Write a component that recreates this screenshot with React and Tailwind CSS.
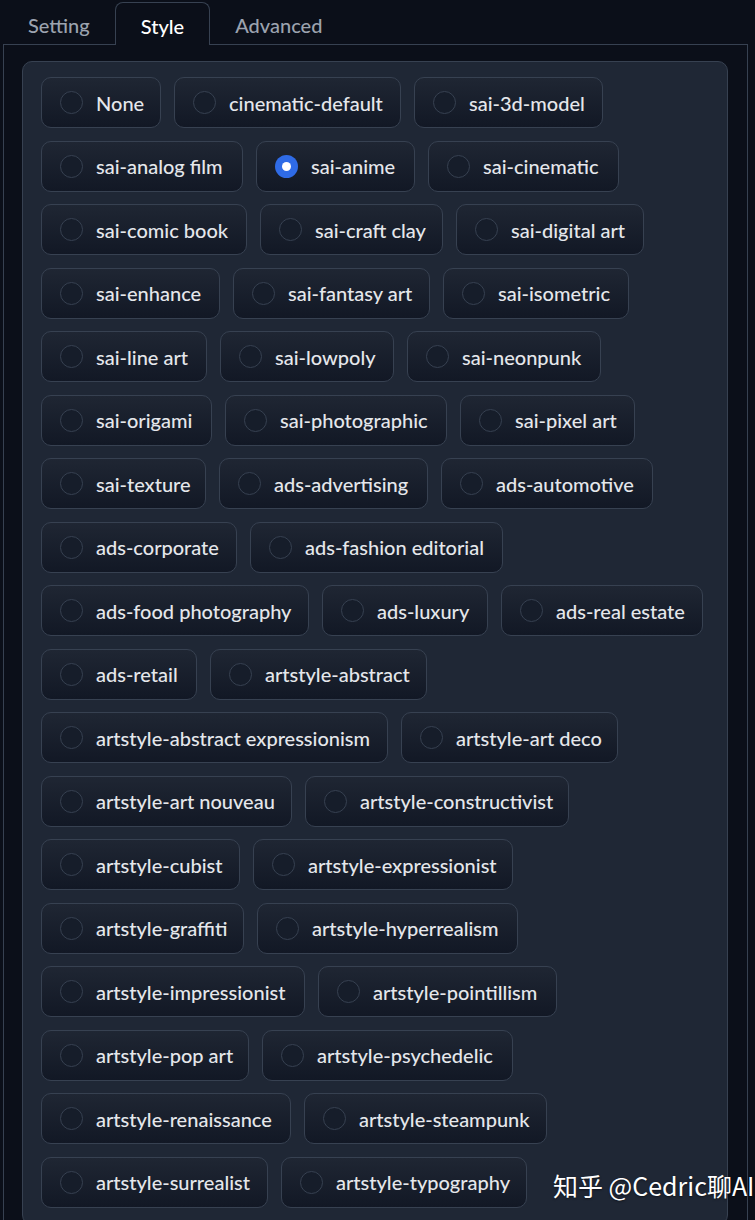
import React from "react";

const rows = [
  [["None", "w-[120px]"], ["cinematic-default", "w-[227px]"], ["sai-3d-model", "w-[189px]"]],
  [["sai-analog film", "w-[202px]"], ["sai-anime", "w-[159px]"], ["sai-cinematic", "w-[191px]"]],
  [["sai-comic book", "w-[206px]"], ["sai-craft clay", "w-[183px]"], ["sai-digital art", "w-[188px]"]],
  [["sai-enhance", "w-[179px]"], ["sai-fantasy art", "w-[197px]"], ["sai-isometric", "w-[186px]"]],
  [["sai-line art", "w-[166px]"], ["sai-lowpoly", "w-[174px]"], ["sai-neonpunk", "w-[194px]"]],
  [["sai-origami", "w-[171px]"], ["sai-photographic", "w-[222px]"], ["sai-pixel art", "w-[175px]"]],
  [["sai-texture", "w-[165px]"], ["ads-advertising", "w-[209px]"], ["ads-automotive", "w-[212px]"]],
  [["ads-corporate", "w-[196px]"], ["ads-fashion editorial", "w-[253px]"]],
  [["ads-food photography", "w-[268px]"], ["ads-luxury", "w-[166px]"], ["ads-real estate", "w-[202px]"]],
  [["ads-retail", "w-[156px]"], ["artstyle-abstract", "w-[217px]"]],
  [["artstyle-abstract expressionism", "w-[347px]"], ["artstyle-art deco", "w-[217px]"]],
  [["artstyle-art nouveau", "w-[251px]"], ["artstyle-constructivist", "w-[264px]"]],
  [["artstyle-cubist", "w-[199px]"], ["artstyle-expressionist", "w-[260px]"]],
  [["artstyle-graffiti", "w-[203px]"], ["artstyle-hyperrealism", "w-[261px]"]],
  [["artstyle-impressionist", "w-[264px]"], ["artstyle-pointillism", "w-[239px]"]],
  [["artstyle-pop art", "w-[208px]"], ["artstyle-psychedelic", "w-[251px]"]],
  [["artstyle-renaissance", "w-[250px]"], ["artstyle-steampunk", "w-[243px]"]],
  [["artstyle-surrealist", "w-[227px]"], ["artstyle-typography", "w-[246px]"]],
];

const StyleOption = ({ label, width, checked }) => (
  <label
    className={`${width} h-[51px] shrink-0 flex items-center gap-[13px] pl-[18px] rounded-[10px] border border-[#374151] bg-gradient-to-b from-[#1f2633] to-[#121825] text-[#e5e7eb] whitespace-nowrap`}
  >
    {checked ? (
      <span className="w-[23px] h-[23px] rounded-full bg-[#2f6be6] flex items-center justify-center">
        <span className="w-[9px] h-[9px] rounded-full bg-white" />
      </span>
    ) : (
      <span className="w-[23px] h-[23px] rounded-full border border-[#374151] bg-[#161d2a]" />
    )}
    <span>{label}</span>
  </label>
);

export default function App() {
  return (
    <div className="relative min-h-screen bg-[#0b0f19] font-['Lato','Liberation_Sans',sans-serif] text-[20px] font-medium overflow-hidden">
      <div className="pl-[3px] w-[748px]">
        {/* Tabs */}
        <div className="flex h-[45px] border-b border-[#374151]">
          <div className="px-[25px] pt-[10px] text-[#9ca3af]">Setting</div>
          <div className="mt-[2px] -mb-px px-[25px] pt-[8px] rounded-t-[8px] border border-b-0 border-[#374151] bg-[#0b0f19] text-white">
            Style
          </div>
          <div className="px-[25px] pt-[10px] text-[#9ca3af]">Advanced</div>
        </div>

        {/* Panel */}
        <div className="border-x border-[#374151] pl-[18px] pr-[19px] pt-[16px] pb-6 min-h-[1180px]">
          <div className="rounded-[10px] border border-[#374151] bg-[#1f2735] pl-[18px] pr-[16px] pt-[15px] pb-4 flex flex-col gap-[12.5px]">
            {rows.map((row, i) => (
              <div key={i} className="flex gap-[13px]">
                {row.map(([label, width]) => (
                  <StyleOption key={label} label={label} width={width} checked={label === "sai-anime"} />
                ))}
              </div>
            ))}
          </div>
        </div>
      </div>

      {/* Watermark */}
      <div className="absolute left-[553px] top-[1167px] whitespace-nowrap text-white text-[25px] font-normal font-['Noto_Sans_CJK_SC','Noto_Sans',sans-serif] [text-shadow:0_1px_2px_rgba(0,0,0,0.5)]">
        知乎 @Cedric聊AI
      </div>
    </div>
  );
}
